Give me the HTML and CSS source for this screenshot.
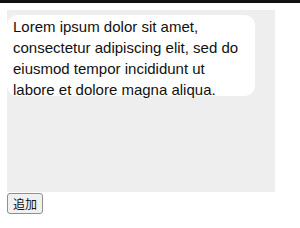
FILE: index.html
```html
<!DOCTYPE html>
<html lang="ja">
<head>
    <meta charset="UTF-8">
    <meta name="viewport" content="width=device-width, initial-scale=1.0">
    <title>メモ</title>
    <link rel="stylesheet" href="styles.css">
</head>
<body>
    <div class="topbar"></div>
    <div class="app">
        <div class="board">
            <div class="note">Lorem ipsum dolor sit amet, consectetur adipiscing elit, sed do eiusmod tempor incididunt ut labore et dolore magna aliqua.</div>
        </div>
        <button class="add-button">追加</button>
    </div>
</body>
</html>
```

FILE: styles.css
```css
* {
    box-sizing: border-box;
}

body {
    margin: 0;
    font-family: "Liberation Sans", "Noto Sans CJK JP", sans-serif;
    background: #ffffff;
    color: #111111;
}

.topbar {
    height: 3px;
    background: #111111;
}

.app {
    padding: 7px 25px 0 7px;
}

.board {
    background: #eeeeee;
    height: 182px;
    padding: 5px 20px 0 0;
}

.note {
    background: #ffffff;
    border-radius: 10px;
    padding: 1px 6px 0 6px;
    font-size: 15px;
    line-height: 21px;
    height: 81px;
}

.add-button {
    margin-top: 1px;
    font-family: "Noto Sans CJK JP", sans-serif;
    font-size: 12px;
    padding: 1px 5px;
    background: #f0f0f0;
    border: 1px solid #8f8f8f;
    border-radius: 3px;
    color: #111111;
}
```
